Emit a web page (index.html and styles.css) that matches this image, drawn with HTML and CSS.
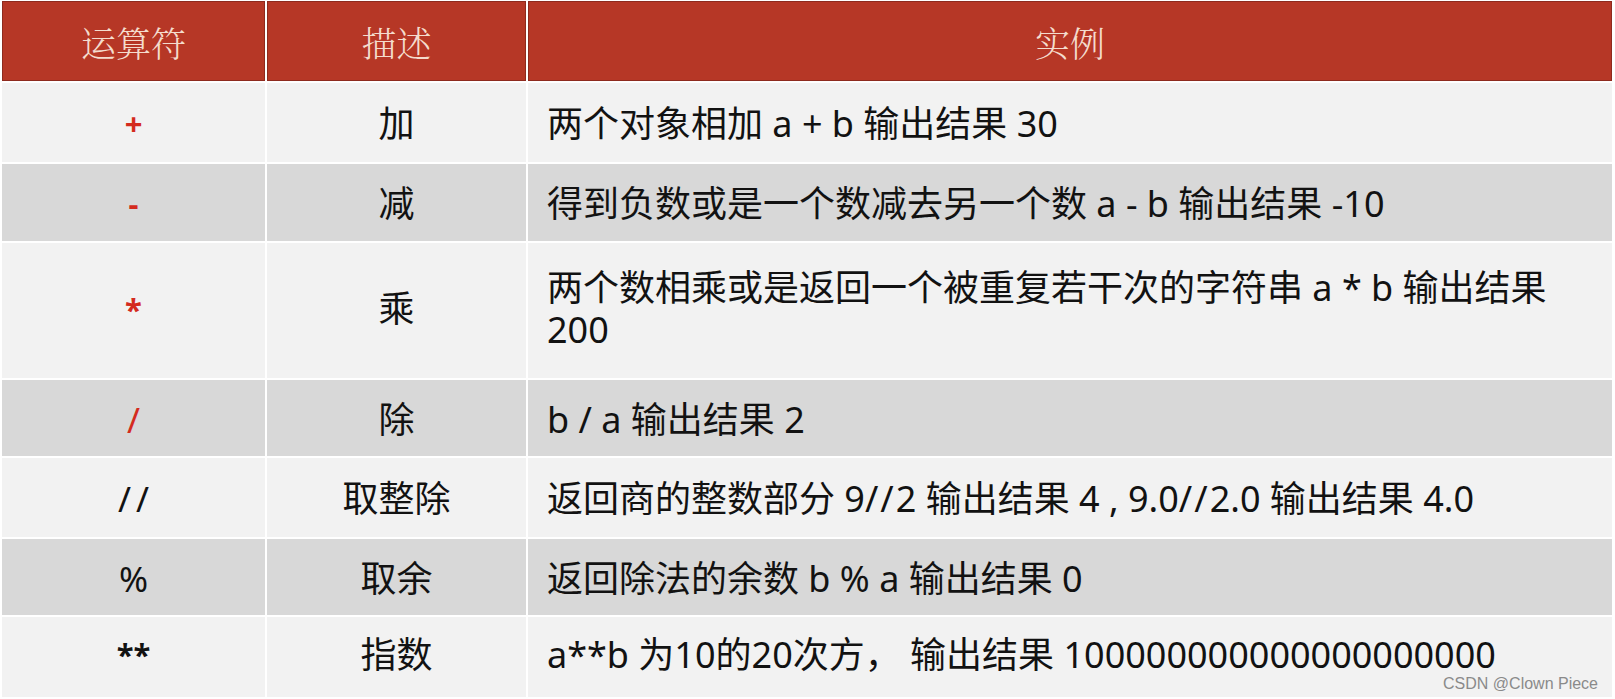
FILE: index.html
```html
<!DOCTYPE html>
<html lang="zh-CN">
<head>
<meta charset="utf-8">
<title>算术运算符</title>
<link rel="stylesheet" href="styles.css">
</head>
<body>
<div class="page">
  <table class="ops">
    <colgroup>
      <col class="c-op">
      <col class="c-desc">
      <col class="c-ex">
    </colgroup>
    <thead>
      <tr class="head">
        <th>运算符</th>
        <th>描述</th>
        <th>实例</th>
      </tr>
    </thead>
    <tbody>
      <tr class="light h79">
        <td class="op red bold">+</td>
        <td class="desc">加</td>
        <td class="ex">两个对象相加 a + b 输出结果 30</td>
      </tr>
      <tr class="dark h77">
        <td class="op red bold">-</td>
        <td class="desc">减</td>
        <td class="ex">得到负数或是一个数减去另一个数 a - b 输出结果 -10</td>
      </tr>
      <tr class="light tall">
        <td class="op red bold">*</td>
        <td class="desc">乘</td>
        <td class="ex">两个数相乘或是返回一个被重复若干次的字符串 a * b 输出结果<br>200</td>
      </tr>
      <tr class="dark h76">
        <td class="op red big">/</td>
        <td class="desc">除</td>
        <td class="ex">b / a 输出结果 2</td>
      </tr>
      <tr class="light h79">
        <td class="op big spaced">//</td>
        <td class="desc">取整除</td>
        <td class="ex">返回商的整数部分 9<span class="sl">//</span>2 输出结果 4 , 9.0<span class="sl">//</span>2.0 输出结果 4.0</td>
      </tr>
      <tr class="dark h76">
        <td class="op big">%</td>
        <td class="desc">取余</td>
        <td class="ex">返回除法的余数 b % a 输出结果 0</td>
      </tr>
      <tr class="light h80">
        <td class="op bold">**</td>
        <td class="desc">指数</td>
        <td class="ex">a**b 为10的20次方， 输出结果 100000000000000000000</td>
      </tr>
    </tbody>
  </table>
  <div class="watermark">CSDN @Clown Piece</div>
</div>
</body>
</html>
```

FILE: styles.css
```css
html, body {
  margin: 0;
  padding: 0;
  background: #ffffff;
}

.page {
  position: relative;
  width: 1615px;
  height: 699px;
  overflow: hidden;
}

.ops {
  width: 1614px;
  border-collapse: separate;
  border-spacing: 2px;
  margin-top: -1px;
  table-layout: fixed;
  font-family: "Noto Sans", "Noto Sans CJK SC", sans-serif;
  color: #121212;
}

.c-op { width: 263px; }
.c-desc { width: 259px; }
.c-ex { width: auto; }

.head th {
  box-sizing: border-box;
  height: 80px;
  padding: 2px 0 0 0;
  background: #b63726;
  border: 1px solid #8e2a1e;
  color: #f4dccd;
  font-family: "Noto Serif CJK SC", "Noto Sans CJK SC", serif;
  font-weight: 300;
  font-size: 35px;
  line-height: 40px;
  text-align: center;
  vertical-align: middle;
}

td {
  box-sizing: border-box;
  height: 78px;
  padding: 2px 0 0 0;
  vertical-align: middle;
  font-size: 36px;
  line-height: 41px;
}

.h76 td { height: 76px; }
.h77 td { height: 77px; }
.h79 td { height: 79px; }
.h80 td { height: 80px; padding: 0 0 6px 0; }
.tall td { height: 135px; padding: 0 0 4px 0; line-height: 42px; }

.light td { background: #f2f2f2; }
.dark td { background: #d8d8d8; }

.op {
  text-align: center;
  font-size: 31px;
}

.op.big { font-size: 35px; }

.spaced { letter-spacing: 5px; text-indent: 5px; }

.sl { letter-spacing: 2px; }

.bold { font-weight: 700; }

.red { color: #d42b1e; }

.desc {
  text-align: center;
}

.ex {
  text-align: left;
  padding-left: 19px !important;
  padding-right: 12px !important;
}

.watermark {
  position: absolute;
  right: 17px;
  top: 675px;
  font-family: "Liberation Sans", Arial, sans-serif;
  font-size: 16px;
  line-height: 18px;
  color: #8a8a8a;
}
```
